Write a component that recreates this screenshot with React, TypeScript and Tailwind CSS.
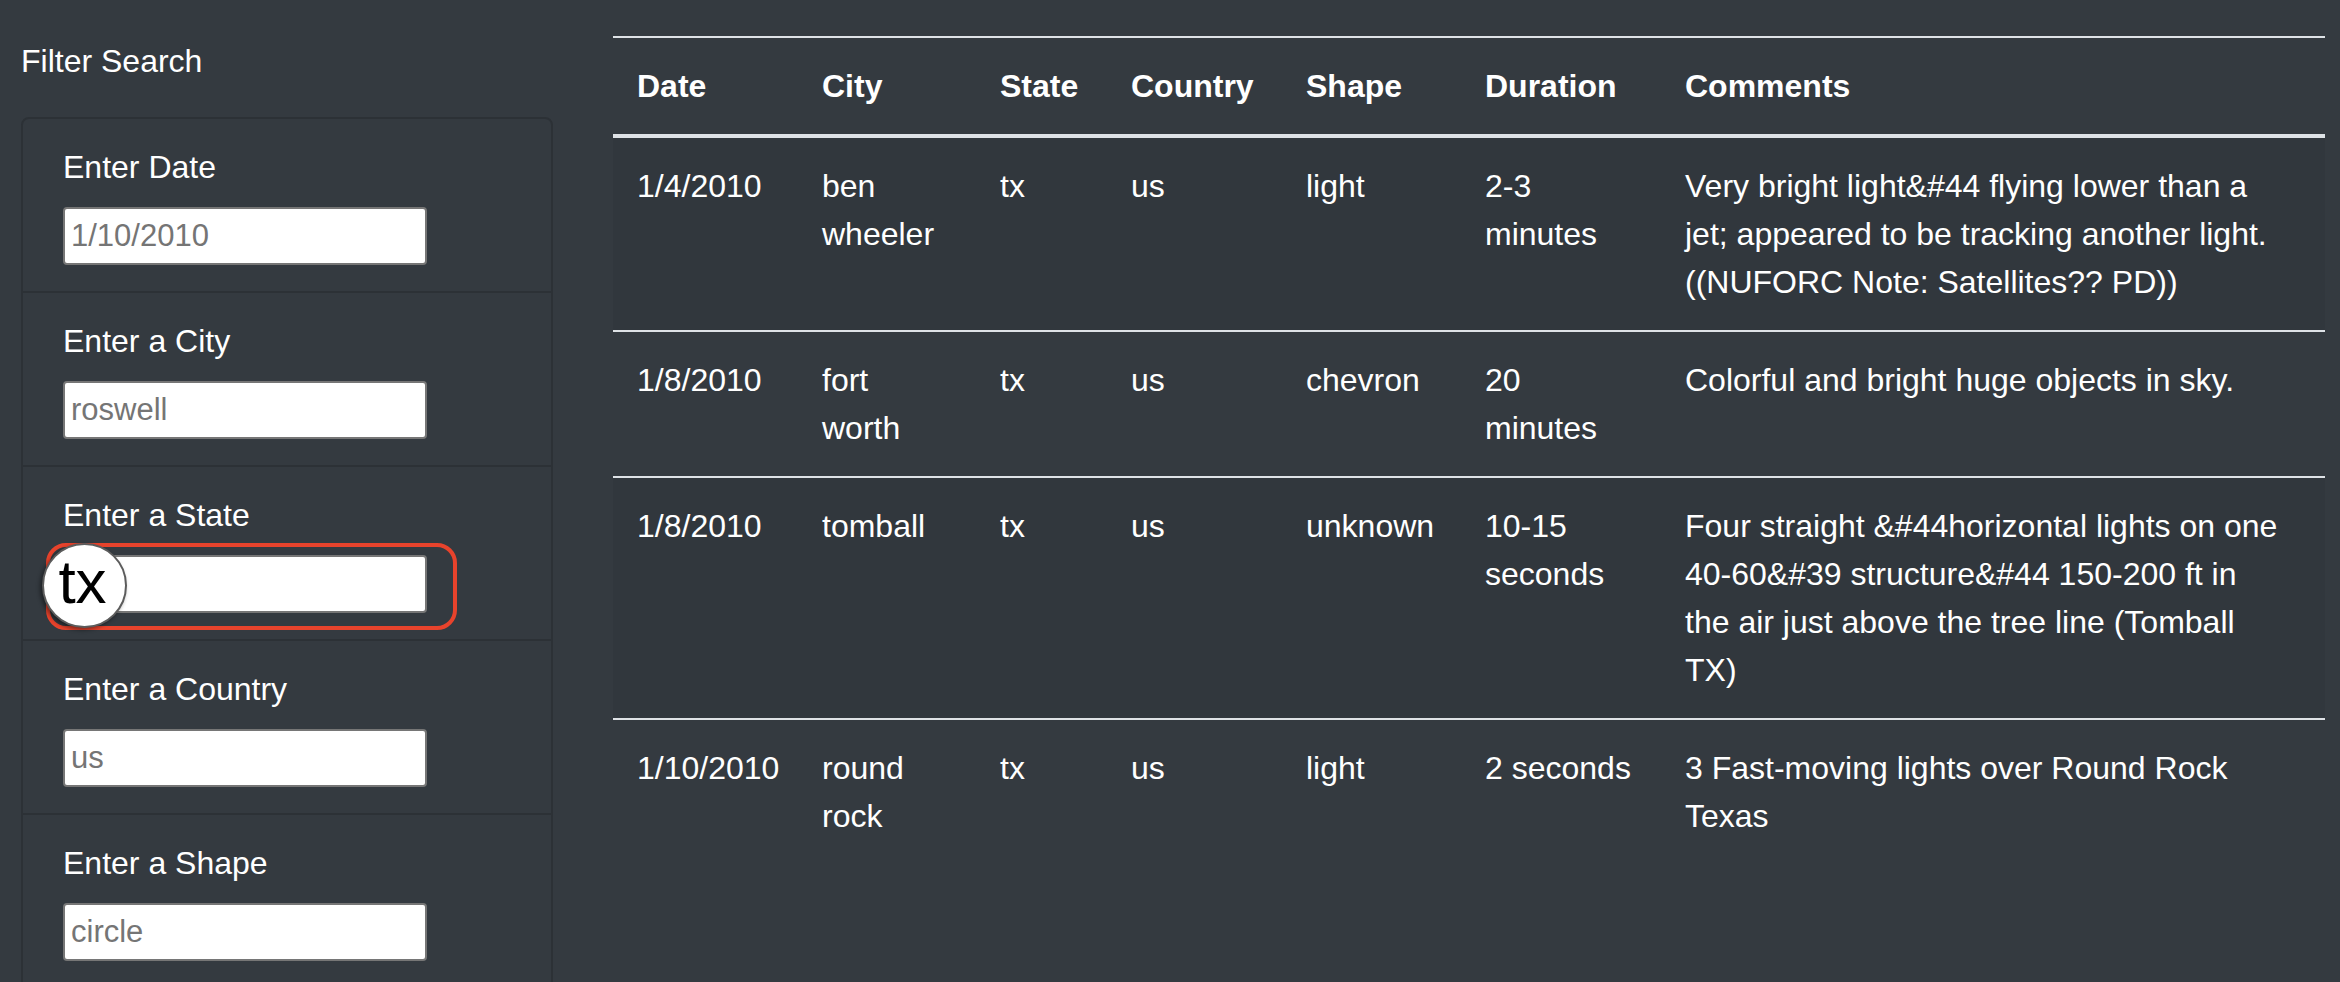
import React from "react";

type Sighting = {
  date: string;
  city: string[];
  state: string;
  country: string;
  shape: string;
  duration: string[];
  comments: string[];
};

const sightings: Sighting[] = [
  {
    date: "1/4/2010",
    city: ["ben", "wheeler"],
    state: "tx",
    country: "us",
    shape: "light",
    duration: ["2-3", "minutes"],
    comments: [
      "Very bright light&#44 flying lower than a",
      "jet; appeared to be tracking another light.",
      "((NUFORC Note: Satellites?? PD))",
    ],
  },
  {
    date: "1/8/2010",
    city: ["fort", "worth"],
    state: "tx",
    country: "us",
    shape: "chevron",
    duration: ["20", "minutes"],
    comments: ["Colorful and bright huge objects in sky."],
  },
  {
    date: "1/8/2010",
    city: ["tomball"],
    state: "tx",
    country: "us",
    shape: "unknown",
    duration: ["10-15", "seconds"],
    comments: [
      "Four straight &#44horizontal lights on one",
      "40-60&#39 structure&#44 150-200 ft in",
      "the air just above the tree line (Tomball",
      "TX)",
    ],
  },
  {
    date: "1/10/2010",
    city: ["round", "rock"],
    state: "tx",
    country: "us",
    shape: "light",
    duration: ["2 seconds"],
    comments: ["3 Fast-moving lights over Round Rock", "Texas"],
  },
];

const filters = [
  { label: "Enter Date", placeholder: "1/10/2010" },
  { label: "Enter a City", placeholder: "roswell" },
  { label: "Enter a State", placeholder: "tx", highlight: true },
  { label: "Enter a Country", placeholder: "us" },
  { label: "Enter a Shape", placeholder: "circle" },
];

const Lines = ({ lines }: { lines: string[] }) => (
  <>
    {lines.map((l, i) => (
      <span key={i} className="block whitespace-nowrap">
        {l}
      </span>
    ))}
  </>
);

const FilterItem = ({
  label,
  placeholder,
  highlight,
  first,
}: {
  label: string;
  placeholder: string;
  highlight?: boolean;
  first: boolean;
}) => (
  <li className={`px-10 py-6 ${first ? "" : "border-t-2 border-[#2c3136]"}`}>
    <label className="block mb-4">{label}</label>
    <div className="relative w-[364px] h-[60px]">
      <input
        type="text"
        placeholder={placeholder}
        className="w-full h-[58px] bg-white border-2 border-[#767676] rounded-[4px] px-[6px] text-[31px] text-black placeholder:text-[#757575] outline-none"
      />
      {highlight && (
        <>
          <div className="absolute left-[-17px] top-[-12px] w-[411px] h-[87px] border-4 border-[#e8432c] rounded-[20px] pointer-events-none" />
          <div className="absolute left-[-21px] top-[-12px] w-[85px] h-[85px] rounded-full bg-white border-2 border-[#5c5c5c] shadow-[-2px_2px_4px_rgba(0,0,0,0.45)] flex items-center justify-center pb-[8px] pr-[4px] text-[62px] leading-none text-black">
            tx
          </div>
        </>
      )}
    </div>
  </li>
);

export default function App() {
  return (
    <div className="h-[982px] w-[2340px] overflow-hidden bg-[#343a40] text-white font-['Liberation_Sans',Arial,sans-serif] text-[32px] leading-[48px]">
      <div className="flex pt-[37px] pl-[21px]">
        <aside className="w-[532px] shrink-0">
          <p className="mb-[32px]">Filter Search</p>
          <ul className="border-2 border-[#2c3136] rounded-lg">
            {filters.map((f, i) => (
              <FilterItem key={f.label} {...f} first={i === 0} />
            ))}
          </ul>
        </aside>

        <div className="ml-[60px] -mt-px w-[1712px] shrink-0">
          <table className="w-full table-fixed border-separate border-spacing-0 text-left">
            <colgroup>
              <col className="w-[185px]" />
              <col className="w-[178px]" />
              <col className="w-[131px]" />
              <col className="w-[175px]" />
              <col className="w-[179px]" />
              <col className="w-[200px]" />
              <col className="w-[664px]" />
            </colgroup>
            <thead>
              <tr>
                {["Date", "City", "State", "Country", "Shape", "Duration", "Comments"].map((h) => (
                  <th
                    key={h}
                    className="p-6 font-bold align-top border-t-2 border-b-4 border-[#dee2e6]"
                  >
                    {h}
                  </th>
                ))}
              </tr>
            </thead>
            <tbody>
              {sightings.map((s, i) => {
                const cell = `p-6 align-top ${i === 0 ? "" : "border-t-2 border-[#dee2e6]"}`;
                return (
                  <tr key={i} className={i % 2 === 0 ? "bg-[#31373d]" : ""}>
                    <td className={cell}>{s.date}</td>
                    <td className={cell}>
                      <Lines lines={s.city} />
                    </td>
                    <td className={cell}>{s.state}</td>
                    <td className={cell}>{s.country}</td>
                    <td className={cell}>{s.shape}</td>
                    <td className={cell}>
                      <Lines lines={s.duration} />
                    </td>
                    <td className={cell}>
                      <Lines lines={s.comments} />
                    </td>
                  </tr>
                );
              })}
            </tbody>
          </table>
        </div>
      </div>
    </div>
  );
}
